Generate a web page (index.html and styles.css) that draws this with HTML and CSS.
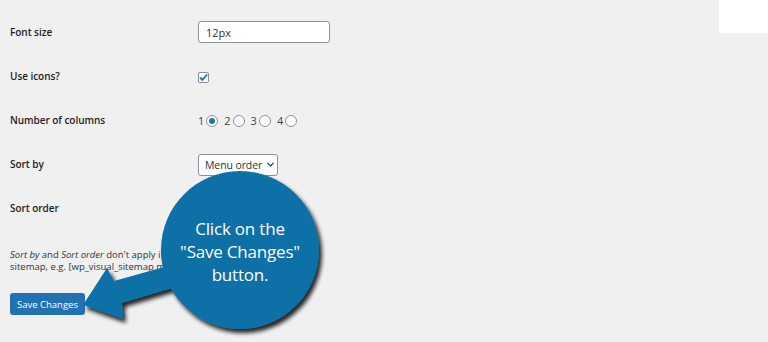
FILE: index.html
```html
<!DOCTYPE html>
<html>
<head>
<meta charset="utf-8">
<link rel="stylesheet" href="styles.css">
</head>
<body>
<div class="page">
  <div class="corner-card"></div>
  <div class="form">
    <div class="row">
      <div class="label">Font size</div>
      <div class="field"><div class="input">12px</div></div>
    </div>
    <div class="row">
      <div class="label">Use icons?</div>
      <div class="field">
        <span class="checkbox"><svg viewBox="0 0 11 11" width="11" height="11"><path d="M2 5.5 L4.4 7.9 L9.2 2.5" fill="none" stroke="#2271b1" stroke-width="1.8"/></svg></span>
      </div>
    </div>
    <div class="row">
      <div class="label">Number of columns</div>
      <div class="field radios">
        <span class="opt">1<span class="radio on"></span></span>
        <span class="opt">2<span class="radio"></span></span>
        <span class="opt">3<span class="radio"></span></span>
        <span class="opt">4<span class="radio"></span></span>
      </div>
    </div>
    <div class="row">
      <div class="label">Sort by</div>
      <div class="field">
        <div class="select"><span>Menu order</span><svg viewBox="0 0 10 10" width="9" height="9"><path d="M1.5 3.2 L5 6.7 L8.5 3.2" fill="none" stroke="#2c3338" stroke-width="1.3"/></svg></div>
      </div>
    </div>
    <div class="row">
      <div class="label">Sort order</div>
      <div class="field"></div>
    </div>
  </div>
  <p class="desc"><span class="line"><em>Sort by</em> and <em>Sort order</em> don't apply if you</span><span class="line">sitemap, e.g. [wp_visual_sitemap menu</span></p>
  <div class="btn">Save Changes</div>

  <svg class="callout" width="768" height="342" viewBox="0 0 768 342">
    <defs>
      <filter id="sh" x="-30%" y="-30%" width="160%" height="160%">
        <feGaussianBlur in="SourceAlpha" stdDeviation="2"/>
        <feOffset dx="3" dy="4" result="b"/>
        <feComponentTransfer><feFuncA type="linear" slope="0.85"/></feComponentTransfer>
        <feMerge><feMergeNode/><feMergeNode in="SourceGraphic"/></feMerge>
      </filter>
    </defs>
    <g filter="url(#sh)" fill="#0b6fa6">
      <polygon points="83,305 107,268 114,281 182,262 186,284 122,303 123,319"/>
      <circle cx="240" cy="250" r="79"/>
    </g>
    <text class="ctext" x="240" y="235" text-anchor="middle">Click on the</text>
    <text class="ctext" x="240" y="258" text-anchor="middle">"Save Changes"</text>
    <text class="ctext" x="240" y="281" text-anchor="middle">button.</text>
  </svg>
</div>
</body>
</html>
```
FILE: styles.css
```css
html, body {
  margin: 0;
  padding: 0;
  background: #f0f0f1;
}
.page {
  position: relative;
  width: 768px;
  height: 342px;
  overflow: hidden;
  font-family: "Open Sans", "Noto Sans", sans-serif;
  color: #1d2327;
  padding-left: 10px;
  box-sizing: border-box;
}
.corner-card {
  position: absolute;
  right: 0;
  top: 0;
  width: 49px;
  height: 33px;
  background: #fff;
  border-bottom-left-radius: 4px;
}
.form {
  padding-top: 10px;
  display: flex;
  flex-direction: column;
}
.row {
  height: 44px;
  display: flex;
  align-items: center;
}
.label {
  width: 188px;
  font-size: 10px;
  font-weight: 600;
  letter-spacing: -0.05px;
  color: #1d2327;
}
.field {
  display: flex;
  align-items: center;
}
.input {
  width: 132px;
  height: 22px;
  box-sizing: border-box;
  border: 1px solid #8c8f94;
  border-radius: 3px;
  background: #fff;
  font-size: 11px;
  color: #2c3338;
  padding-left: 7px;
  display: flex;
  align-items: center;
}
.checkbox {
  width: 11px;
  height: 11px;
  box-sizing: border-box;
  border: 1px solid #8c8f94;
  border-radius: 2px;
  background: #fff;
  display: flex;
  align-items: center;
  justify-content: center;
  margin-top: 2px;
}
.checkbox svg { display: block; flex: none; }
.radios {
  gap: 6px;
  font-size: 11px;
  color: #3c434a;
  margin-top: 1px;
}
.opt {
  display: flex;
  align-items: center;
  gap: 2px;
}
.radio {
  width: 12px;
  height: 12px;
  box-sizing: border-box;
  border: 1px solid #8c8f94;
  border-radius: 50%;
  background: #fff;
  display: flex;
  align-items: center;
  justify-content: center;
}
.radio.on::after {
  content: "";
  width: 6px;
  height: 6px;
  border-radius: 50%;
  background: #2271b1;
}
.select {
  width: 80px;
  height: 22px;
  box-sizing: border-box;
  border: 1px solid #8c8f94;
  border-radius: 3px;
  background: #fff;
  font-size: 10.5px;
  letter-spacing: -0.1px;
  color: #2c3338;
  padding: 0 2px 0 6px;
  display: flex;
  align-items: center;
  justify-content: space-between;
  white-space: nowrap;
  margin-top: 1px;
}
.select svg {
  flex: none;
}
.desc {
  margin: 19px 0 0 0;
  font-size: 9.5px;
  line-height: 12px;
  color: #2c3338;
}
.line {
  display: block;
  white-space: nowrap;
}
.btn {
  margin-top: 20px;
  width: 75px;
  height: 22px;
  box-sizing: border-box;
  background: #2271b1;
  border-radius: 3px;
  color: #fff;
  font-size: 9.5px;
  display: flex;
  align-items: center;
  justify-content: center;
}
.callout {
  position: absolute;
  left: 0;
  top: 0;
}
.ctext {
  font-family: "Open Sans", sans-serif;
  font-size: 17px;
  letter-spacing: -0.2px;
  fill: #fff;
}
```
